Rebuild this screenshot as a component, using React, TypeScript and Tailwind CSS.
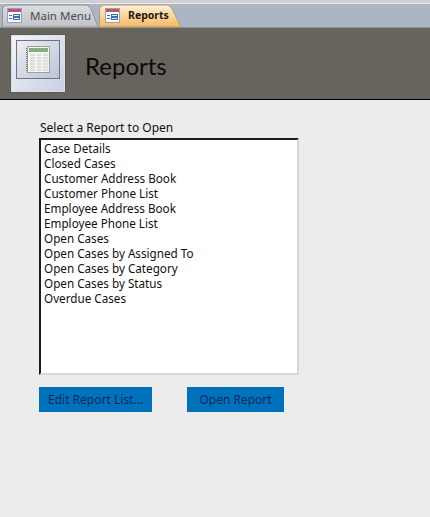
import React from "react";

const reports = [
  "Case Details",
  "Closed Cases",
  "Customer Address Book",
  "Customer Phone List",
  "Employee Address Book",
  "Employee Phone List",
  "Open Cases",
  "Open Cases by Assigned To",
  "Open Cases by Category",
  "Open Cases by Status",
  "Overdue Cases",
];

const uiFont = "font-['Noto_Sans','Liberation_Sans',sans-serif]";

const FormIcon = () => (
  <svg width="15" height="15" viewBox="0 0 15 15" className="block shrink-0">
    <rect x="0.5" y="0.5" width="14" height="14" fill="#f8f9fd" stroke="#9a9db4" />
    <rect x="1" y="1" width="13" height="3" fill="#b5557a" />
    <path d="M2 7.5h3M2 10.5h3" stroke="#3f6fb0" />
    <rect x="6.5" y="6.5" width="6" height="2" fill="#dfe8f5" stroke="#3f6fb0" />
    <rect x="6.5" y="9.5" width="6" height="2" fill="#dfe8f5" stroke="#3f6fb0" />
  </svg>
);

const ReportIcon = () => (
  <svg width="24" height="27" viewBox="0 0 24 27">
    <rect x="1.5" y="0.5" width="22" height="26" fill="#f4f5ee" stroke="#9aa09a" />
    <rect x="3" y="2" width="19" height="4" fill="#7fb07d" />
    <path d="M0.5 2v23" stroke="#6d7f6b" strokeDasharray="1 1" strokeWidth="1.5" />
    <path
      d="M4 9h5M11 9h4M17 9h5M4 12h5M11 12h4M17 12h5M4 15h5M11 15h4M17 15h5M4 18h5M11 18h4M17 18h5M4 21h5M11 21h4M17 21h5M4 24h5M11 24h4M17 24h5"
      stroke="#bfc6c8"
    />
  </svg>
);

const App = () => {
  return (
    <div className={`w-[430px] h-[517px] overflow-hidden flex flex-col bg-[#ececec] ${uiFont}`}>
      {/* Tab strip */}
      <div className="h-[28px] shrink-0 flex flex-col bg-gradient-to-b from-[#adb5c4] to-[#a9b5c2] border-b border-[#8f9398]">
        <div className="h-[4px] shrink-0 bg-[#cdd0d4] border-b border-[#e8eaec]" />
        <div className="flex-1 flex items-end pl-[2px] gap-px">
          <div className="relative w-[96px] h-[23px] flex items-center pl-[5px] gap-[8px]">
            <svg width="96" height="23" viewBox="0 0 96 23" className="absolute inset-0">
              <defs>
                <linearGradient id="tabGrey" x1="0" y1="0" x2="0" y2="1">
                  <stop offset="0" stopColor="#dcdde0" />
                  <stop offset="1" stopColor="#bfc2c6" />
                </linearGradient>
              </defs>
              <path d="M0.5 23V6Q0.5 1 6 1H84Q87 1 89 5L96 23Z" fill="url(#tabGrey)" stroke="#8e949c" />
            </svg>
            <span className="relative"><FormIcon /></span>
            <span className="relative text-[11.5px] leading-none text-[#4a4d52]">Main Menu</span>
          </div>
          <div className="relative w-[83px] h-[23px] flex items-center pl-[6px] gap-[8px]">
            <svg width="83" height="23" viewBox="0 0 83 23" className="absolute inset-0">
              <defs>
                <linearGradient id="tabOrange" x1="0" y1="0" x2="0" y2="1">
                  <stop offset="0" stopColor="#fdf0d8" />
                  <stop offset="0.55" stopColor="#fbd295" />
                  <stop offset="1" stopColor="#f8b85f" />
                </linearGradient>
              </defs>
              <path d="M0.5 23V6Q0.5 1 6 1H68Q71 1 73 5L82 23Z" fill="url(#tabOrange)" stroke="#b39a74" />
            </svg>
            <span className="relative"><FormIcon /></span>
            <span className="relative text-[10.5px] leading-none font-bold text-[#1a1a1a]">Reports</span>
          </div>
        </div>
      </div>

      {/* Form header */}
      <div className="h-[72px] shrink-0 flex items-center bg-[#67645e] border-b border-black pl-[11px]">
        <div className="w-[54px] h-[57px] p-[4px] pb-[12px] bg-gradient-to-br from-[#f4f5f8] to-[#c9d0e4] border border-[#dcdfe6] shadow-[0_0_1px_#333]">
          <div className="w-full h-full flex items-center justify-center border border-[#6f7480] bg-gradient-to-br from-[#eceef0] to-[#bcc4dc]">
            <ReportIcon />
          </div>
        </div>
        <span className="ml-[20px] mt-[4px] text-[24px] leading-none text-[#0a0a0a] font-['Lato','Open_Sans',sans-serif]">
          Reports
        </span>
      </div>

      {/* Detail section */}
      <div className="flex-1 flex flex-col items-start pt-[19px] pl-[39px]">
        <label className="ml-px h-[17px] text-[12px] leading-[17px] text-[#111]">Select a Report to Open</label>
        <div className="mt-[2px] w-[260px] h-[237px] bg-white border-2 border-t-[#1c1c1c] border-l-[#1c1c1c] border-r-[#d6d6d6] border-b-[#d6d6d6] pl-[3px] pt-px">
          {reports.map((r) => (
            <div key={r} className="h-[15px] text-[11.7px] leading-[15px] text-[#111] whitespace-nowrap">
              {r}
            </div>
          ))}
        </div>
        <div className="mt-[12px] flex gap-[35px]">
          <button className="w-[113px] h-[25px] bg-[#0072bc] text-[12px] leading-[15px] text-[#0b2a5e]">Edit Report List...</button>
          <button className="w-[97px] h-[25px] bg-[#0072bc] text-[12px] leading-[15px] text-[#0b2a5e]">Open Report</button>
        </div>
      </div>
    </div>
  );
};

export default App;
